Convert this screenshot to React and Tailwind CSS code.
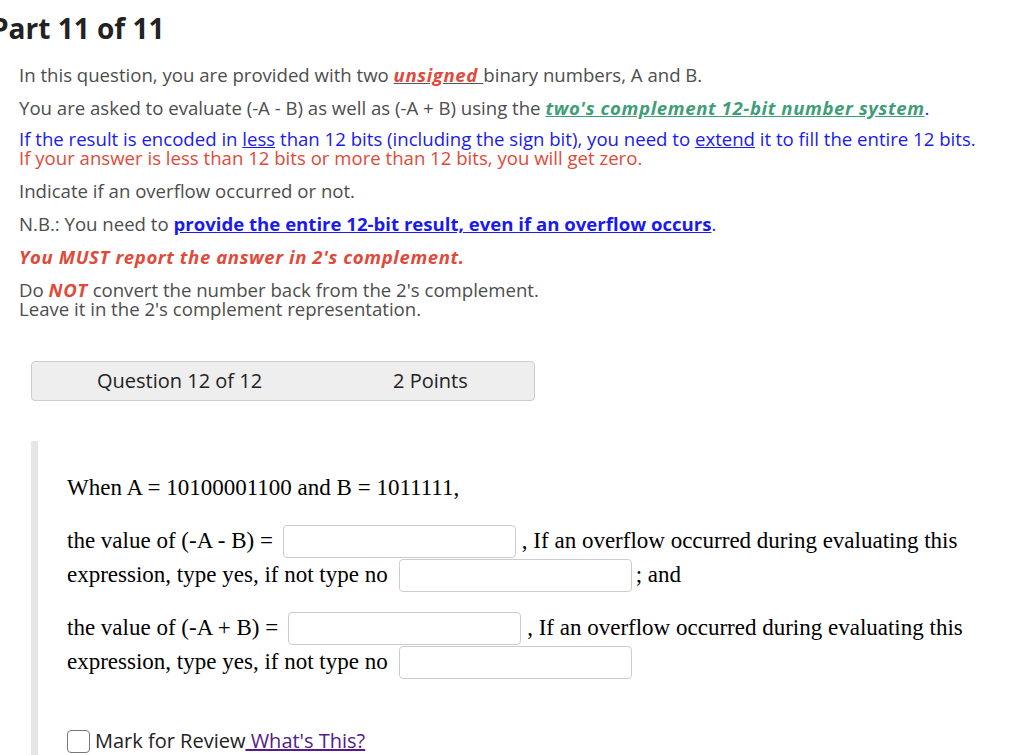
import React from "react";

export default function App() {
  return (
    <div className="w-[1024px] h-[755px] overflow-hidden bg-white relative" style={{ fontFamily: "'Open Sans', sans-serif" }}>
      <h1 className="ml-[-9px] pt-[9px] text-[28px] leading-[38px] font-bold text-[#222]">Part 11 of 11</h1>
      <div className="pl-[19px] text-[18.6px] text-[#4d4d4d]">
        <p className="mt-[16px] leading-[24px]">
          In this question, you are provided with two{" "}
          <span className="underline font-bold italic tracking-[0.6px] text-[#e04a3a] decoration-[#555]">unsigned </span>binary numbers, A and B.
        </p>
        <p className="mt-[9px] leading-[24px]">
          You are asked to evaluate (-A - B) as well as (-A + B) using the{" "}
          <span className="underline font-bold italic tracking-[0.6px] text-[#3f9e78]">two's complement 12-bit number system</span>
          <span className="text-[#1a1aee]">.</span>
        </p>
        <p className="mt-[9px] leading-[19px] text-[#1a1aee]">
          If the result is encoded in <span className="underline">less</span> than 12 bits (including the sign bit), you need to{" "}
          <span className="underline">extend</span> it to fill the entire 12 bits.
          <br />
          <span className="text-[#e04a3a]">If your answer is less than 12 bits or more than 12 bits, you will get zero.</span>
        </p>
        <p className="mt-[12px] leading-[24px]">Indicate if an overflow occurred or not.</p>
        <p className="mt-[9px] leading-[24px]">
          N.B.: You need to{" "}
          <span className="underline font-bold text-[#1a1aee]">provide the entire 12-bit result, even if an overflow occurs</span>
          <span className="text-[#1a1aee]">.</span>
        </p>
        <p className="mt-[9px] leading-[24px] font-bold italic tracking-[0.58px] text-[#e04a3a]">You MUST report the answer in 2's complement.</p>
        <p className="mt-[11px] leading-[19px]">
          Do <span className="font-bold italic tracking-[0.6px] text-[#e04a3a]">NOT</span> convert the number back from the 2's complement.
          <br />
          Leave it in the 2's complement representation.
        </p>
      </div>
      <div className="ml-[31px] mt-[43px] w-[504px] h-[40px] rounded-[4px] border border-[#cccccc] bg-[#eeeeee] flex items-center text-[20px] text-[#222]">
        <span className="ml-[65px] w-[296px]">Question 12 of 12</span>
        <span>2 Points</span>
      </div>
      <div className="ml-[31px] mt-[40px] border-l-[7px] border-[#e6e6e6] pl-[29px] pt-[30px] h-[400px]">
        <div className="text-[23px] text-black leading-[34px]" style={{ fontFamily: "'Liberation Serif', serif" }}>
          <p>When A = 10100001100 and B = 1011111,</p>
          <div className="mt-[19px]">
            <div className="flex items-center">
              <span>the value of (-A - B) =</span>
              <input className="ml-[10px] w-[233px] h-[33px] border border-[#cccccc] rounded-[4px]" />
              <span className="ml-[6px]">, If an overflow occurred during evaluating this</span>
            </div>
            <div className="flex items-center">
              <span>expression, type yes, if not type no</span>
              <input className="ml-[11px] w-[233px] h-[33px] border border-[#cccccc] rounded-[4px]" />
              <span className="ml-[4px]">; and</span>
            </div>
          </div>
          <div className="mt-[19px]">
            <div className="flex items-center">
              <span>the value of (-A + B) =</span>
              <input className="ml-[10px] w-[233px] h-[33px] border border-[#cccccc] rounded-[4px]" />
              <span className="ml-[6px]">, If an overflow occurred during evaluating this</span>
            </div>
            <div className="flex items-center">
              <span>expression, type yes, if not type no</span>
              <input className="ml-[11px] w-[233px] h-[33px] border border-[#cccccc] rounded-[4px]" />
            </div>
          </div>
        </div>
        <div className="mt-[47px] flex items-center text-[20px] text-[#222]">
          <span className="w-[23px] h-[23px] border-[1.5px] border-[#777] rounded-[4px] bg-white shrink-0" />
          <span className="ml-[5px] whitespace-pre">
            Mark for Review<span className="underline text-[#551a8b]"> What's This?</span>
          </span>
        </div>
      </div>
    </div>
  );
}
